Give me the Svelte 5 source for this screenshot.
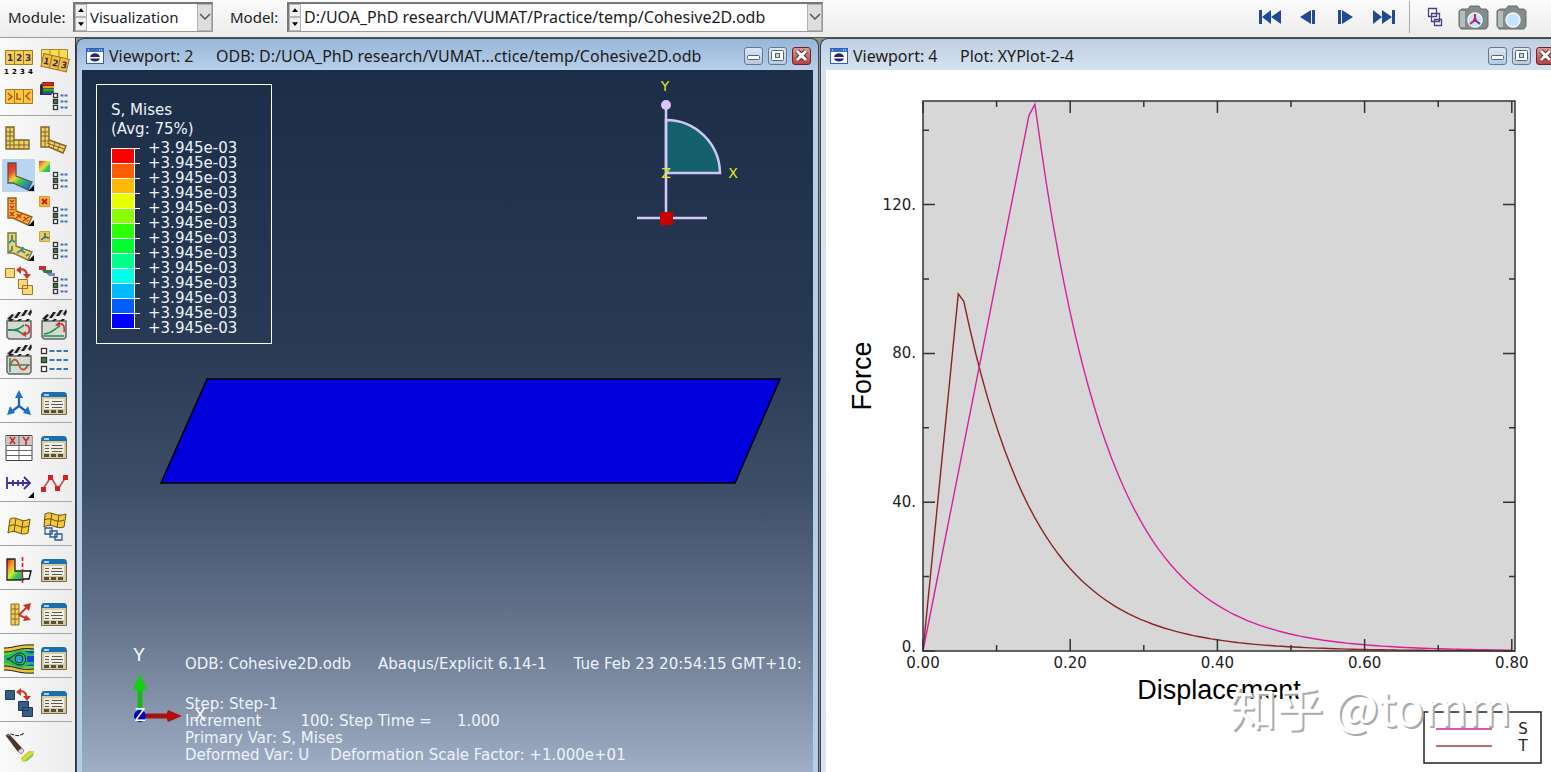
<script>
  const odbPath = "D:/UOA_PhD research/VUMAT/Practice/temp/Cohesive2D.odb";

  // contour legend, highest value first
  const bands = [
    "#ff0000",
    "#ff5d00",
    "#ffb900",
    "#e8ff00",
    "#8bff00",
    "#2eff00",
    "#00ff2e",
    "#00ff8b",
    "#00ffe8",
    "#00b9ff",
    "#005dff",
    "#0000ff",
  ];
  const contourValues = Array(13).fill("+3.945e-03");

  const list = (x, y, s, step) =>
    [0, 1, 2]
      .map(
        (i) =>
          `<rect x="${x}" y="${y + i * step}" width="${s}" height="${s}" fill="${i === 1 ? "#3c8a4a" : "#fff"}" stroke="#333" stroke-width="1.3"/>
          <path d="M${x + s + 3} ${y + i * step + s / 2}H30" stroke="#3d74b8" stroke-width="2" stroke-dasharray="${s > 4 ? "5 2" : "3 1"}"/>`
      )
      .join("");
  const miniList = list(15.5, 12.5, 4, 6);
  const flyout = `<path d="M31 25v6h-6z" fill="#000"/>`;
  const clapper = `<path d="M4 12h24v16l-2 2H6l-2-2z" fill="#d3dbd1" stroke="#666" stroke-width="1.5"/>
    <path d="M4 11l1-4 22-6 1 4-19 6z" fill="#ddd"/>
    <path d="M4 10l5-5 2 1-4 5zM11 9l4-6 3 0-4 6zM18 7l4-6 3 0-4 6zM25 5l3-5 1 3-2 4zM5 12l3-2h3l-2 2zM14 12l2-2h3l-2 2zM22 12l2-2h3l-2 2z" fill="#222"/>`;
  const bentL = "M5 3h8v13l16 6-4 8-15-7H5z";

  const icons = {
    renumber: `<path d="M2.500 4.500h27v14h-27z" fill="#f5cf55" stroke="#a57a20"/><path d="M11.500 4v15M20.500 4v15" stroke="#a57a20"/>
      <g font-family="DejaVu Sans" font-weight="bold" fill="#3b3157"><text x="4" y="15" font-size="9">1</text><text x="13" y="15" font-size="9">2</text><text x="22" y="15" font-size="9">3</text>
      <g font-size="7" fill="#000"><text x="1" y="28">1</text><text x="9" y="28">2</text><text x="17" y="28">3</text><text x="25" y="28">4</text></g></g>`,
    superimpose: `<path d="M3.500 3.500h26v12h-26zM12 3v12M21 3v12" fill="#f7dd55" stroke="#a8862a"/>
      <g transform="rotate(13 16 17)"><path d="M4 10h26v13H4zM12.500 10v13M21 10v13" fill="#f0bd45" stroke="#9a701a"/>
      <g font-family="DejaVu Sans" font-weight="bold" font-size="9" fill="#3b3157"><text x="5" y="20">1</text><text x="14" y="20">2</text><text x="23" y="20">3</text></g></g>`,
    brackets: `<path d="M2.500 8.500h27v14h-27z" fill="#f8c83e" stroke="#a57a20"/><path d="M11.500 8v15M20.500 8v15" stroke="#a57a20"/>
      <path d="M5 12l4 4-4 3M14 12v6h4M27 11l-4 4 4 4" fill="none" stroke="#d3481c" stroke-width="1.600"/>`,
    spectrum: `<path d="M2 4l3-3h11v10l-3 3H2z" fill="#303030"/><path d="M4 3h12" stroke="#e02020" stroke-width="3"/><path d="M5 6h11" stroke="#e8a020" stroke-width="2"/><path d="M5 9h11" stroke="#2faa35" stroke-width="3"/><path d="M5 12h9" stroke="#2050c0" stroke-width="2"/>${miniList}`,
    undeformed: `<path d="M3 2h8v13h15v9H3z" fill="#efd070" stroke="#80661e" stroke-width="1.400"/>
      <path d="M7 2v22M3 7h8M3 11h8M3 16h8M11 15v9M16 15v9M21 15v9M3 20h23" stroke="#80661e"/>`,
    deformed: `<path d="M3 2h8v13l17 6-3 7-14-6H3z" fill="#efd070" stroke="#80661e" stroke-width="1.400"/>
      <path d="M7 2v20M3 7h8M3 11h8M3 16h8M11 15v7M17 17l-2 7M22 19l-3 7M9 18l17 6" stroke="#80661e" fill="none"/>`,
    contour: `<path d="${bentL}" fill="url(#bent)" stroke="#4d5b56" stroke-width="1.300"/>${flyout}`,
    contourOptions: `<path d="M1 1h11v11H1z" fill="url(#rainbow)"/>${miniList}`,
    symbols: `<path d="${bentL}" fill="#f8b33c" stroke="#80661e" stroke-width="1.400"/><path d="M7 5l4 4m0-4l-4 4M7 11l4 4m0-4l-4 4M7 17l4 4m0-4l-4 4M14 19l4 4m1-4l-6 4M21 22l4 4m1-4l-6 4" stroke="#d02f16" stroke-width="1.500"/>${flyout}`,
    symbolOptions: `<path d="M1.500 1.500h10v10h-10z" fill="#f9b233" stroke="#d99a2a"/><path d="M4 4l5 5m0-5l-5 5" stroke="#c91d14" stroke-width="2"/>${miniList}`,
    material: `<path d="${bentL}" fill="#ecd36a" stroke="#80763a" stroke-width="1.400"/><path d="M9 5v5l-3 3M9 10l3 2M9 16v4l-3 2M14 23l4-3 4 3M19 20l1-3M23 26l3-2" fill="none" stroke="#2f8a96" stroke-width="1.800"/>${flyout}`,
    materialOptions: `<path d="M1.500 1.500h10v10h-10z" fill="#e6ca55" stroke="#c5a83a"/><path d="M7 3v4l-4 3M7 7l4 1" fill="none" stroke="#27649c" stroke-width="1.500"/>${miniList}`,
    duplicate: `<g fill="#ffd873" stroke="#94753a"><path d="M2.500 3.500h9v9h-9zM15.500 14.500h9v9h-9zM19.500 20.500h10v9h-10z"/></g><path d="M15 5c6-2 9 1 9 6" fill="none" stroke="#cc3524" stroke-width="2"/><path d="M13 5l5-4v8zM20 9h8l-4 5z" fill="#cc3524"/>`,
    overlayOptions: `<path d="M1 1h7v4H1z" fill="#c32b3d"/><path d="M4 5h10v3H6z" fill="#367a3b"/><path d="M8 8h9v3h-6z" fill="#7d85cf"/>${miniList}`,
    animateScale: `${clapper}<path d="M5 21h6c5 0 7-3 10-5M11 21c5 0 7 3 10 5" fill="none" stroke="#2d8b57" stroke-width="1.800"/><path d="M22 16c6 0 6 9 0 9" fill="none" stroke="#d03b3b" stroke-width="2"/><path d="M18 25l5-3v6z" fill="#d03b3b"/>`,
    animateTime: `${clapper}<path d="M6 25c9-1 11-6 16-8M5 27h21" fill="none" stroke="#2d8b57" stroke-width="1.600"/><path d="M19 16c6-3 8 1 7 7" fill="none" stroke="#d03b3b" stroke-width="1.700"/><path d="M17 16l5-4v6z" fill="#d03b3b"/>`,
    animateHarmonic: `${clapper}<path d="M7 14v14M6 21h21" stroke="#2d8b57" stroke-width="1.500"/><path d="M7 21c4-8 7-6 9 0s6 6 9 0" fill="none" stroke="#c0503c" stroke-width="1.800"/>`,
    animateOptions: list(3.5, 4.5, 5, 9),
    csys: `<g stroke="#1765ba" stroke-width="2.200" fill="none"><path d="M16 18V8M16 18l-8 6M16 18l8 6"/></g><path d="M16 2l4 8h-8zM4 27l3-9 5 7zM28 27l-3-9-5 7z" fill="#1c72c8"/>`,
    dialog: `<path d="M3.500 7.500h25v19h-25z" fill="#d5caa2" stroke="#756c50"/><path d="M3 9c0-4 1-5 4-5h18c3 0 4 1 4 5z" fill="#1b6fae"/><path d="M6 7h5" stroke="#d9efff" stroke-width="1.500"/>
      <path d="M6 11h20v10H6z" fill="#f1eee4"/><path d="M7 13.500h4M7 16.500h4M7 19.500h4M14 13.500h10M13 16.500h12M14 19.500h10" stroke="#5d5b55"/><path d="M6 22h5v3H6zM13 22h5v3h-5zM20 22h5v3h-5z" fill="#57513d"/>`,
    xyData: `<path d="M3 3.500h26v25H3z" fill="#fff" stroke="#444"/><path d="M3 4h26v9H3z" fill="#c9c6bf"/><path d="M3 13.500h26M3 18.500h26M3 23.500h26M16 4v24" stroke="#666"/><path d="M7 5l5 7m0-7l-5 7M20 5l3 4v4m3-8l-3 4" stroke="#c52e27" stroke-width="1.600" fill="none"/>`,
    path: `<path d="M4 10v12M4 16h22M10 13v6M15 13v6M20 13v6M21 10l6 6-6 6" fill="none" stroke="#3b2fa0" stroke-width="1.800"/>${flyout}`,
    polyline: `<path d="M5 22l8-12 7 12 8-12" fill="none" stroke="#c84a3e" stroke-width="1.500"/><path d="M3 20h5v5H3zM10 8h5v5h-5zM17 19h5v5h-5zM25 8h5v5h-5z" fill="#d12420"/>`,
    warp: `<path d="M7 8c7-4 10 5 20 0l-2 14c-8 4-12-5-20 0z" fill="#f5c93c" stroke="#665011"/><path d="M13 7l-2 14M20 10l-2 13M6 15c8-4 11 4 20 0" fill="none" stroke="#665011"/>`,
    warpLinked: `<path d="M7 3c7-4 10 4 21 0l-2 13c-8 3-12-5-20 0z" fill="#f5c93c" stroke="#665011"/><path d="M14 2l-2 13M21 4l-2 13M6 9c8-4 11 4 20 0" fill="none" stroke="#665011"/><g fill="none" stroke="#2f5a9c" stroke-width="1.300"><path d="M7 17h7v6H7zM12 20h7v6h-7zM17 23h7v6h-7z"/></g>`,
    viewCut: `<path d="M4 4h8v12h8v9H4z" fill="url(#rainbow)" stroke="#222" stroke-width="1.300"/><path d="M20 16h8l-2 8h-6" fill="#fff" stroke="#111" stroke-width="1.400"/><path d="M19.500 2v26" stroke="#d1202a" stroke-width="1.600" stroke-dasharray="4 2"/>`,
    freeBody: `<path d="M8 5h8v21H8z" fill="#f1d15c" stroke="#8a6d22"/><path d="M12 5v21M8 10h8M8 15h8M8 20h8" stroke="#8a6d22"/><path d="M16 16l9-9M16 16l9 4" stroke="#d0382f" stroke-width="2"/><path d="M28 4l-2 8-6-6zM28 21l-8 1 3-6z" fill="#c7342b"/>`,
    stream: `<path d="M1 5c10 0 15-4 30-3v28c-14 1-18-3-30-3z" fill="#f4c034"/><path d="M1 9c12-1 14-4 30-3v20c-14 0-18-3-30-3z" fill="#64d232"/><path d="M17 8h14v15H17z" fill="#1845df"/><path d="M1 12c9 0 10-5 16-5s8 5 14 3v12c-7-2-8 3-14 3S8 20 1 20z" fill="#2cb760"/><path d="M24 13h7v6h-7z" fill="#1845df"/>
      <path d="M1 5c10 0 15-4 30-3M1 9c12 0 14-5 30-3M1 27c12 0 15 4 30 3M1 23c12 0 15 5 30 3M4 16c6-1 8-6 13-6 7 0 8 12 0 12-5 0-8-5-13-6" fill="none" stroke="#123"/><circle cx="16" cy="16" r="4" fill="#27a4d5" stroke="#134"/>`,
    overlay: `<g fill="#355f87" stroke="#1f3a55"><path d="M2.500 3.500h9v9h-9zM15.500 14.500h10v9h-10zM19.500 20.500h10v9h-10z"/></g><path d="M15 5c5-2 8 0 9 6" fill="none" stroke="#cc3524" stroke-width="2"/><path d="M13 5l5-4v8zM20 9h8l-4 5z" fill="#cc3524"/>`,
    brush: `<path d="M3 5c5-6 10 4 18-3" fill="none" stroke="#333" stroke-width="1.200" stroke-dasharray="4 1"/><path d="M3 5l4-1 12 13-4 4z" fill="#4b332e"/><path d="M15 20l4-3 2 3-3 3z" fill="#ddd" stroke="#888"/><path d="M18 27l8-7h5l-1 5-6 5-5 1z" fill="url(#rainbow)"/>`,
    first: `<path d="M5 9h3v14H5zM17 9v14l-9-7zM27 9v14l-10-7z" fill="#204b93"/>`,
    prev: `<path d="M19 9v14L8 16zM20 9h3v14h-3z" fill="#204b93"/>`,
    next: `<path d="M8 9h3v14H8zM12 9v14l11-7z" fill="#204b93"/>`,
    last: `<path d="M5 9v14l9-7zM14 9v14l10-7zM24 9h3v14h-3z" fill="#204b93"/>`,
    cascade: `<g fill="#fff" fill-opacity=".5" stroke="#4a4087" stroke-width="1.300"><path d="M9.500 7.500h8v8h-8zM12.500 12.500h8v8h-8zM15.500 18.500h7v6h-7z"/></g>`,
    camera: `<path d="M2 10l3-2h6l2-3h9l2 3h5l2 2v15l-2 3H4l-2-3z" fill="#858b8b" stroke="#656b6c"/><path d="M3 10h5v16H3z" fill="#b7bcbc"/><circle cx="18" cy="19" r="7" fill="#c7e3fa" stroke="#eef7ff" stroke-width="1.500"/>`,
  };
  icons.cameraTriad =
    icons.camera +
    `<path d="M18 19v-6M18 19l-5 4" stroke="#c3265b" stroke-width="2"/><path d="M18 19l5 4" stroke="#2a4fb0" stroke-width="2"/><circle cx="18" cy="19" r="2" fill="#c3265b"/>`;

  // [icon, label]
  const toolGroups = [
    [
      ["renumber", "Common options"],
      ["superimpose", "Superimpose options"],
      ["brackets", "Allow multiple plot states"],
      ["spectrum", "Result options"],
    ],
    [
      ["undeformed", "Plot undeformed shape"],
      ["deformed", "Plot deformed shape"],
      ["contour", "Plot contours"],
      ["contourOptions", "Contour options"],
      ["symbols", "Plot symbols"],
      ["symbolOptions", "Symbol options"],
      ["material", "Plot material orientations"],
      ["materialOptions", "Material orientation options"],
      ["duplicate", "Superimpose plots"],
      ["overlayOptions", "Overlay options"],
    ],
    [
      ["animateScale", "Animate scale factor"],
      ["animateTime", "Animate time history"],
      ["animateHarmonic", "Animate harmonic"],
      ["animateOptions", "Animation options"],
    ],
    [
      ["csys", "Create coordinate system"],
      ["dialog", "Coordinate system manager"],
    ],
    [
      ["xyData", "Create XY data"],
      ["dialog", "XY data manager"],
      ["path", "Create path"],
      ["polyline", "XY options"],
    ],
    [
      ["warp", "Create field output"],
      ["warpLinked", "Create field output from frames"],
    ],
    [
      ["viewCut", "Activate view cut"],
      ["dialog", "View cut manager"],
    ],
    [
      ["freeBody", "Free body cut"],
      ["dialog", "Free body cut manager"],
    ],
    [
      ["stream", "Create stream"],
      ["dialog", "Stream manager"],
    ],
    [
      ["overlay", "Overlay plot"],
      ["dialog", "Overlay plot layer manager"],
    ],
    [["brush", "Color code"]],
  ];

  const playback = [
    ["first", "First"],
    ["prev", "Previous"],
    ["next", "Next"],
    ["last", "Last"],
  ];
  const viewTools = [
    ["cascade", "Linked viewports"],
    ["cameraTriad", "Camera with triad"],
    ["camera", "Camera"],
  ];

  // XY plot: data units to drawing units
  const plot = { left: 97, top: 31, right: 689, bottom: 581 };
  const px = (x) => plot.left + x * 736;
  const py = (y) => plot.bottom - y * 3.72;

  // linear loading up to the peak, then exponential softening
  function softening(points, rate) {
    const [x0, y0] = points[points.length - 1];
    const all = [...points];
    for (let x = x0 + 0.008; x <= 0.804; x += 0.008) {
      all.push([x, y0 * Math.exp(-rate * (x - x0))]);
    }
    return all.map(([x, y]) => `${px(x).toFixed(1)},${py(y).toFixed(1)}`).join(" ");
  }

  const series = [
    {
      name: "T",
      color: "#8a2424",
      points: softening([[0, 0], [0.048, 96], [0.0555, 94]], 10),
    },
    {
      name: "S",
      color: "#d6219c",
      points: softening([[0, 0], [0.144, 144], [0.152, 147]], 10),
    },
  ];

  const xTicks = [0, 1, 2, 3, 4, 5, 6, 7, 8];
  const yTicks = [0, 20, 40, 60, 80, 100, 120, 140];
</script>

{#snippet icon(name)}
  <svg class="icon" viewBox="0 0 32 32" aria-hidden="true">{@html icons[name]}</svg>
{/snippet}

{#snippet combo(id, value)}
  <div class="combo">
    <span class="spinner">
      <button aria-label="Previous {id}"><svg viewBox="0 0 8 5"><path d="M4 0l4 5H0z" /></svg></button>
      <button aria-label="Next {id}"><svg viewBox="0 0 8 5"><path d="M4 5l4-5H0z" /></svg></button>
    </span>
    <select {id}>
      <option>{value}</option>
    </select>
    <span class="arrow">
      <svg viewBox="0 0 12 8"><path d="M1 1l5 5 5-5" fill="none" stroke="#555" stroke-width="1.500" /></svg>
    </span>
  </div>
{/snippet}

{#snippet titlebar(name, detail)}
  <header class="titlebar">
    <svg class="app-icon" viewBox="0 0 18 16" aria-hidden="true">
      <rect x="0.500" y="0.500" width="17" height="15" fill="#fff" stroke="#2f62ba" />
      <path d="M1 1h16v3H1z" fill="#3a70c8" />
      <path d="M2 2h1M13 2h1M15 2h1" stroke="#fff" />
      <path d="M4 9c1-5 9-5 10 0zM4 10.500h10c-1 4-9 4-10 0z" fill="#2a2377" />
    </svg>
    <h2>{name}</h2>
    <span class="detail">{detail}</span>
    <button class="win" aria-label="Minimize">
      <svg viewBox="0 0 17 16"><rect x="2.500" y="7.500" width="12" height="4" rx="1" fill="#fff" stroke="#566478" /></svg>
    </button>
    <button class="win" aria-label="Maximize">
      <svg viewBox="0 0 17 16"><rect x="2.500" y="2.500" width="12" height="10" rx="1" fill="#fff" stroke="#566478" /><rect x="6.500" y="5.500" width="4" height="4" fill="#c5d7ea" stroke="#566478" /></svg>
    </button>
    <button class="win close" aria-label="Close">
      <svg viewBox="0 0 17 16"><path d="M4 3l9 9M13 3l-9 9" stroke="#5f2f32" stroke-width="5" /><path d="M4 3l9 9M13 3l-9 9" stroke="#fff" stroke-width="3" /></svg>
    </button>
  </header>
{/snippet}

<svg class="defs" width="0" height="0" aria-hidden="true">
  <linearGradient id="rainbow" x1="0" y1="0" x2="1" y2="1">
    <stop offset="0" stop-color="#f0201c" />
    <stop offset="0.300" stop-color="#f3a82a" />
    <stop offset="0.500" stop-color="#cfe83a" />
    <stop offset="0.700" stop-color="#3fc545" />
    <stop offset="1" stop-color="#1e9fd0" />
  </linearGradient>
  <linearGradient id="bent" x1="0" y1="0" x2="0.700" y2="1">
    <stop offset="0" stop-color="#ee1c1c" />
    <stop offset="0.300" stop-color="#f0482a" />
    <stop offset="0.500" stop-color="#f0d63a" />
    <stop offset="0.700" stop-color="#3fc545" />
    <stop offset="1" stop-color="#1e6fe0" />
  </linearGradient>
</svg>

<div class="app">
  <div class="context-bar">
    <label for="module">Module:</label>
    <div class="module">{@render combo("module", "Visualization")}</div>
    <label for="model">Model:</label>
    <div class="model">{@render combo("model", odbPath)}</div>
    <div class="playback">
      {#each playback as [name, label]}
        <button aria-label={label}>{@render icon(name)}</button>
      {/each}
      <span class="divider"></span>
      {#each viewTools as [name, label]}
        <button aria-label={label}>{@render icon(name)}</button>
      {/each}
    </div>
  </div>

  <div class="body">
    <nav class="toolbox">
      {#each toolGroups as group}
        <div class="group">
          {#each group as [name, label]}
            <button class:active={name === "contour"} aria-label={label}>{@render icon(name)}</button>
          {/each}
        </div>
      {/each}
    </nav>

    <main class="workspace">
      <section class="viewport current">
        {@render titlebar("Viewport: 2", "ODB: D:/UOA_PhD research/VUMAT...ctice/temp/Cohesive2D.odb")}
        <div class="canvas">
          <svg class="model-view" viewBox="0 0 731 702">
            <path d="M125 309H698L653 413H79z" fill="#0000dc" stroke="#000" stroke-width="1.500" />
          </svg>

          <svg class="compass" viewBox="0 0 120 160">
            <path d="M36 44a54 54 0 0 1 54 53H36z" fill="#14606e" stroke="#ccc8f6" stroke-width="2.500" />
            <path d="M36 29V142M7 142H77" stroke="#d5c8fa" stroke-width="2.500" />
            <circle cx="36" cy="29" r="5" fill="#dcc6fb" />
            <rect x="30" y="136" width="13" height="13" fill="#c80000" />
            <g class="axis-name">
              <text x="35" y="15">Y</text>
              <text x="36" y="102">Z</text>
              <text x="103" y="102">X</text>
            </g>
          </svg>

          <div class="contour-legend">
            <div>S, Mises</div>
            <div>(Avg: 75%)</div>
            <div class="scale">
              <div class="bands">
                {#each bands as color}
                  <div class="band"><i style="background: {color}"></i></div>
                {/each}
              </div>
              <ul>
                {#each contourValues as value}
                  <li>{value}</li>
                {/each}
              </ul>
            </div>
          </div>

          <div class="state">
            <p class="title"><span>ODB: Cohesive2D.odb</span><span>Abaqus/Explicit 6.14-1</span><span>Tue Feb 23 20:54:15 GMT+10:</span></p>
            <p>Step: Step-1</p>
            <p class="increment"><span>Increment</span><span>100: Step Time =</span><span>1.000</span></p>
            <p>Primary Var: S, Mises</p>
            <p class="deformed"><span>Deformed Var: U</span><span>Deformation Scale Factor: +1.000e+01</span></p>
          </div>

          <svg class="triad" viewBox="0 0 90 90">
            <path d="M18 62V38" stroke="#18b818" stroke-width="5" />
            <path d="M18 21l7 15q-7 4-14 0z" fill="#12d012" />
            <path d="M24 63H48" stroke="#a01414" stroke-width="5" />
            <path d="M60 63L46 57q-3 6 0 12z" fill="#b01010" />
            <circle cx="18" cy="63" r="6" fill="#0000b8" />
            <text x="17" y="8">Y</text>
            <text x="18" y="68">Z</text>
            <text x="78" y="68">X</text>
          </svg>
        </div>
      </section>

      <section class="viewport">
        {@render titlebar("Viewport: 4", "Plot: XYPlot-2-4")}
        <div class="sheet">
          <svg class="chart" viewBox="0 0 731 702">
            <rect x={plot.left} y={plot.top} width={plot.right - plot.left} height={plot.bottom - plot.top} fill="#d7d7d7" />
            {#each series as s}
              <polyline points={s.points} fill="none" stroke={s.color} stroke-width="1.400" />
            {/each}
            <g class="frame">
              <rect x={plot.left} y={plot.top} width={plot.right - plot.left} height={plot.bottom - plot.top} />
              {#each xTicks as t}
                {@const len = t % 2 ? 6 : 12}
                <path d="M{px(t / 10)} {plot.top}v{len}M{px(t / 10)} {plot.bottom}v-{len}" />
              {/each}
              {#each yTicks as t}
                {@const len = t % 40 ? 6 : 12}
                <path d="M{plot.left} {py(t)}h{len}M{plot.right} {py(t)}h-{len}" />
              {/each}
            </g>
            <g class="tick-labels">
              {#each xTicks.filter((t) => t % 2 === 0) as t}
                <text x={px(t / 10)} y="598" text-anchor="middle">{(t / 10).toFixed(2)}</text>
              {/each}
              <!-- the zero label stays clear of the x axis labels -->
              {#each yTicks.filter((t) => t % 40 === 0) as t}
                <text x="90" y={Math.min(py(t) + 5, 582)} text-anchor="end">{t}.</text>
              {/each}
            </g>
            <text class="axis-title" x="393" y="629" text-anchor="middle">Displacement</text>
            <text class="axis-title" transform="translate(45 306) rotate(-90)" text-anchor="middle">Force</text>

            <rect x="598" y="642" width="117" height="51" fill="#fff" stroke="#222" stroke-width="1.500" />
            <path d="M610 659h56" stroke="#d6219c" stroke-width="1.500" />
            <path d="M610 676h56" stroke="#a83a3a" stroke-width="1.500" />
            <g class="tick-labels">
              <text x="697" y="664" text-anchor="middle">S</text>
              <text x="697" y="681" text-anchor="middle">T</text>
            </g>
          </svg>
          <span class="watermark">知乎 @tomm</span>
        </div>
      </section>
    </main>
  </div>
</div>

<style>
  :global(body) {
    margin: 0;
    background: #f3f3f3;
  }

  .defs {
    position: absolute;
  }

  .app {
    display: flex;
    flex-direction: column;
    min-height: 100vh;
    overflow: hidden;
    color: #1c1c1c;
    font: 15px/20px "Noto Sans", "Open Sans", sans-serif;
  }

  button {
    padding: 0;
    border: 0;
    background: none;
  }

  .icon {
    display: block;
    width: 32px;
    height: 32px;
  }

  /* context bar */

  .context-bar {
    display: flex;
    align-items: center;
    height: 37px;
    box-sizing: border-box;
    padding: 0 21px 4px 8px;
    background: linear-gradient(#fbfbfb, #ececec);
  }

  .context-bar label {
    width: 65px;
    white-space: nowrap;
  }

  .context-bar .module + label {
    width: 57px;
    margin-left: 17px;
  }

  .module {
    flex: 0 0 140px;
  }

  .model {
    flex: 0 1 536px;
    min-width: 0;
    font-size: 16px;
  }

  .combo {
    display: flex;
    height: 30px;
    box-sizing: border-box;
    border: 1px solid #999;
    border-top: 2px solid #777;
    border-left: 2px solid #777;
    background: #fff;
  }

  .spinner {
    display: flex;
    flex-direction: column;
    flex: 0 0 12px;
    background: #f0f0f0;
  }

  .spinner button {
    display: grid;
    flex: 1;
    place-items: center;
    border: 1px solid #b5b5b5;
  }

  .spinner svg {
    width: 6px;
    height: 4px;
  }

  .combo select {
    flex: 1;
    min-width: 0;
    padding: 0 0 0 3px;
    border: 0;
    background: none;
    color: inherit;
    font: inherit;
    appearance: none;
  }

  .arrow {
    display: grid;
    flex: 0 0 13px;
    place-items: center;
    border: 1px solid #b0b0b0;
    background: #dedede;
  }

  .arrow svg {
    width: 12px;
    height: 8px;
  }

  .playback {
    display: flex;
    align-items: center;
    margin-left: auto;
  }

  .playback button {
    display: grid;
    width: 38px;
    place-items: center;
  }

  .divider {
    width: 1px;
    height: 32px;
    margin: 0 6px;
    background: #aaa;
  }

  /* toolbox */

  .body {
    display: flex;
    flex: 1;
  }

  .toolbox {
    flex: 0 0 75px;
    box-sizing: border-box;
    border-top: 1px solid #9a9a9a;
    background: linear-gradient(90deg, #fafafa, #ececec);
  }

  .group {
    display: grid;
    grid-template-columns: 35px 35px;
    grid-auto-rows: 35px;
    width: 71px;
    padding: 7px 0 1px 1px;
    border-bottom: 1px solid #a5a5a5;
  }

  .group:first-child {
    padding-top: 6px;
  }

  .group:last-child {
    border-bottom: 0;
  }

  .group button {
    display: grid;
    place-items: center;
  }

  .group .active {
    background: #b9d5f1;
    background-clip: content-box;
    padding: 1px;
  }

  /* viewports */

  .workspace {
    display: grid;
    flex: 1;
    grid-template-columns: 1fr 1fr;
    gap: 1px;
    min-width: 0;
    margin-right: -12px;
    border-top: 1px solid #555;
    border-left: 1px solid #333;
    background: #8f8f8f;
  }

  .viewport {
    display: flex;
    flex-direction: column;
    min-width: 0;
    padding: 0 5px;
    border: 1px solid #3c464f;
    border-bottom: 0;
    border-radius: 8px 8px 0 0;
    background: linear-gradient(#becfe2, #d6e2f0 31px, #dde3f0);
  }

  .viewport.current {
    background: linear-gradient(#98b6d8, #b7cfea 31px, #b4cdea);
  }

  .titlebar {
    display: flex;
    align-items: center;
    gap: 5px;
    height: 31px;
    box-sizing: border-box;
    padding: 3px 2px 0 4px;
    font-size: 16px;
    white-space: nowrap;
  }

  .app-icon {
    flex: 0 0 18px;
    height: 16px;
  }

  .titlebar h2 {
    flex: 0 0 102px;
    margin: 0;
    font: inherit;
  }

  .detail {
    flex: 1;
    min-width: 0;
    overflow: hidden;
    text-overflow: ellipsis;
  }

  .win {
    flex: 0 0 19px;
    height: 18px;
    box-sizing: border-box;
    border: 1px solid #66788f;
    border-radius: 3px;
    background: linear-gradient(#dbe6f3, #b4cae2);
  }

  .win svg {
    display: block;
    width: 17px;
    height: 16px;
  }

  .close {
    border-color: #6b2429;
    background: linear-gradient(#d89a98, #b8413f);
  }

  .canvas {
    position: relative;
    display: flex;
    flex: 1;
    flex-direction: column;
    align-items: flex-start;
    overflow: hidden;
    background: linear-gradient(#1b2d47, #293b54 40%, #3d4e68 60%, #68768e 80%, #a0aec5);
    color: #eef3fa;
    font: 15px/17px "DejaVu Sans", sans-serif;
  }

  .model-view {
    position: absolute;
    width: 100%;
    height: 100%;
  }

  .compass {
    position: absolute;
    top: 6px;
    right: 63px;
    width: 120px;
    height: 160px;
  }

  .compass .axis-name {
    fill: #e6e619;
    font-size: 14px;
    text-anchor: middle;
  }

  .contour-legend {
    position: relative;
    width: 176px;
    height: 260px;
    box-sizing: border-box;
    margin: 14px;
    padding: 16px 14px;
    border: 1px solid #fff;
    line-height: 19px;
  }

  .scale {
    display: flex;
    gap: 8px;
  }

  .bands {
    width: 29px;
    margin-top: 9px;
  }

  .band {
    height: 14px;
    border-bottom: 1px solid #fff;
  }

  .band:first-child {
    border-top: 1px solid #fff;
  }

  .band i {
    display: block;
    width: 22px;
    height: 14px;
    border: 1px solid #fff;
    border-width: 0 1px;
  }

  .scale ul {
    margin: 2px 0 0;
    padding: 0;
    list-style: none;
    line-height: 15px;
  }

  .state {
    position: relative;
    margin-top: auto;
    padding: 0 0 8px 103px;
    white-space: nowrap;
  }

  .state p {
    display: flex;
    margin: 0;
  }

  .state .title {
    gap: 27px;
    margin-bottom: 23px;
  }

  .increment span:nth-child(2) {
    margin: 0 25px 0 39px;
  }

  .deformed {
    gap: 21px;
  }

  .triad {
    position: absolute;
    bottom: 29px;
    left: 40px;
    width: 90px;
    height: 90px;
    overflow: visible;
  }

  .triad text {
    fill: #fff;
    font: 18px "Liberation Sans", sans-serif;
    text-anchor: middle;
  }

  .sheet {
    position: relative;
    flex: 1;
    background: #fff;
  }

  .chart {
    display: block;
    width: 100%;
  }

  .frame rect,
  .frame path {
    fill: none;
    stroke: #333;
    stroke-width: 1.5;
  }

  .tick-labels {
    fill: #222;
    font: 15px "DejaVu Sans", sans-serif;
  }

  .axis-title {
    fill: #000;
    font: 27px "Liberation Sans", sans-serif;
  }

  .watermark {
    position: absolute;
    right: 46px;
    bottom: 36px;
    color: #fff;
    font: 47px/60px "Noto Sans CJK SC", sans-serif;
    text-shadow: 2px 2px #aaa;
    white-space: nowrap;
  }
</style>
